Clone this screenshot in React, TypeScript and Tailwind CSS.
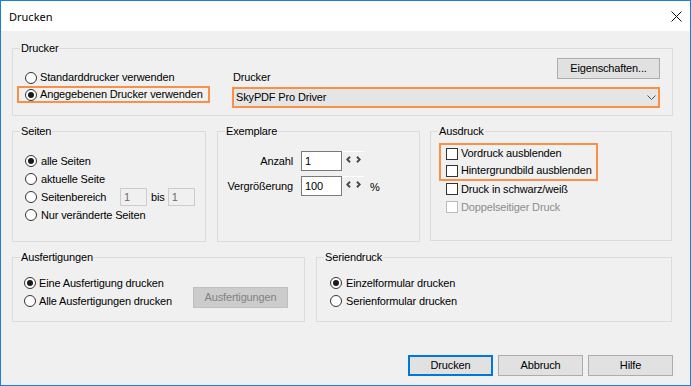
import type { ReactNode } from 'react'

function Radio({ checked = false }: { checked?: boolean }) {
  return (
    <span className="flex h-[12px] w-[12px] shrink-0 items-center justify-center rounded-full border border-[#333333] bg-white">
      {checked && <span className="h-[6px] w-[6px] rounded-full bg-[#1a1a1a]" />}
    </span>
  )
}

function Check({ disabled = false }: { disabled?: boolean }) {
  return (
    <span
      className={`h-[12px] w-[12px] shrink-0 border bg-white ${disabled ? 'border-[#bcbcbc]' : 'border-[#333333]'}`}
    />
  )
}

function Group({ title, className = '', children }: { title: string; className?: string; children?: ReactNode }) {
  return (
    <fieldset className={`min-w-0 border border-[#dcdcdc] ${className}`}>
      <legend className="ml-[7px] px-[1px] text-[11px] leading-[13px]">{title}</legend>
      {children}
    </fieldset>
  )
}

function Spinner() {
  return (
    <div className="flex h-[20px] w-[22px] items-start justify-center gap-[5px] border-t border-white pt-[4px]">
      <svg width="5" height="7" viewBox="0 0 5 7" fill="none" stroke="#4a4a4a" strokeWidth="2">
        <path d="M4 0.8 L1.3 3.5 L4 6.2" />
      </svg>
      <svg width="5" height="7" viewBox="0 0 5 7" fill="none" stroke="#4a4a4a" strokeWidth="2">
        <path d="M1 0.8 L3.7 3.5 L1 6.2" />
      </svg>
    </div>
  )
}

export default function App() {
  return (
    <div className="flex h-[386px] w-[691px] flex-col border border-[#1a7fd9] bg-[#f0f0f0] font-['Liberation_Sans',Arial,sans-serif] text-[11px] leading-[13px] tracking-[-0.15px] text-black">
      <div className="flex h-[30px] shrink-0 items-center justify-between bg-white pl-[8px] pr-[8px] tracking-normal">
        <span className="font-['Noto_Sans',sans-serif] text-[11px]">Drucken</span>
        <svg width="11" height="11" viewBox="0 0 11 11" fill="none" stroke="#111111" strokeWidth="1">
          <path d="M0.5 0.5 L10.5 10.5 M10.5 0.5 L0.5 10.5" />
        </svg>
      </div>

      <div className="flex flex-1 flex-col pl-[11px] pr-[17px]">
        {/* Drucker */}
        <Group title="Drucker" className="mt-[11px] h-[74px]">
          <div className="flex">
            <div className="flex w-[219px] flex-col pt-[14px]">
              <div className="flex h-[17px] items-center pl-[12px]">
                <Radio />
                <span className="ml-[3px]">Standarddrucker verwenden</span>
              </div>
              <div className="ml-[4px] flex h-[17px] w-[193px] items-center border-2 border-[#fa8f45] pl-[6px]">
                <Radio checked />
                <span className="ml-[3px]">Angegebenen Drucker verwenden</span>
              </div>
            </div>
            <div className="flex flex-1 flex-col pr-[12px]">
              <button
                type="button"
                className="mt-[3px] h-[21px] w-[103px] self-end border border-[#adadad] bg-[#e1e1e1]"
              >
                Eigenschaften...
              </button>
              <span className="-mt-[8px] pl-[1px]">Drucker</span>
              <div className="mt-[3px] flex h-[21px] items-center justify-between border-2 border-[#fa8f45] bg-[#e5e5e5] pl-[2px] pr-[2px]">
                <span>SkyPDF Pro Driver</span>
                <svg width="9" height="5" viewBox="0 0 9 5" fill="none" stroke="#555555" strokeWidth="1">
                  <path d="M0.5 0.5 L4.5 4.5 L8.5 0.5" />
                </svg>
              </div>
            </div>
          </div>
        </Group>

        {/* Seiten / Exemplare / Ausdruck */}
        <div className="mt-[9px] flex h-[117px] items-start">
          <Group title="Seiten" className="h-[117px] w-[194px]">
            <div className="flex flex-col pl-[12px] pt-[14px]">
              <div className="flex h-[18px] items-center">
                <Radio checked />
                <span className="ml-[4px]">alle Seiten</span>
              </div>
              <div className="flex h-[18px] items-center">
                <Radio />
                <span className="ml-[4px]">aktuelle Seite</span>
              </div>
              <div className="flex h-[18px] items-center">
                <Radio />
                <span className="ml-[4px] w-[79px]">Seitenbereich</span>
                <span className="flex h-[18px] w-[27px] items-center border border-[#cccccc] pl-[3px] text-[#6d6d6d]">
                  1
                </span>
                <span className="ml-[4px]">bis</span>
                <span className="ml-[3px] flex h-[18px] w-[27px] items-center border border-[#cccccc] pl-[3px] text-[#6d6d6d]">
                  1
                </span>
              </div>
              <div className="flex h-[18px] items-center">
                <Radio />
                <span className="ml-[4px]">Nur veränderte Seiten</span>
              </div>
            </div>
          </Group>

          <Group title="Exemplare" className="ml-[11px] h-[117px] w-[203px]">
            <div className="flex flex-col gap-[5px] pt-[13px]">
              <div className="flex h-[20px] items-center">
                <span className="w-[75px] text-right">Anzahl</span>
                <span className="ml-[8px] flex h-[20px] w-[41px] items-center border border-[#7a7a7a] bg-white pl-[3px]">
                  1
                </span>
                <Spinner />
              </div>
              <div className="flex h-[20px] items-center">
                <span className="w-[75px] text-right">Vergrößerung</span>
                <span className="ml-[8px] flex h-[20px] w-[41px] items-center border border-[#7a7a7a] bg-white pl-[3px]">
                  100
                </span>
                <Spinner />
                <span className="ml-[6px] mt-[3px]">%</span>
              </div>
            </div>
          </Group>

          <Group title="Ausdruck" className="ml-[10px] h-[116px] w-[242px]">
            <div className="flex flex-col pt-[5px]">
              <div className="ml-[8px] flex w-[159px] flex-col border-2 border-[#fa8f45] pl-[5px]">
                <div className="flex h-[17px] items-center">
                  <Check />
                  <span className="ml-[3px]">Vordruck ausblenden</span>
                </div>
                <div className="flex h-[17px] items-center">
                  <Check />
                  <span className="ml-[3px]">Hintergrundbild ausblenden</span>
                </div>
              </div>
              <div className="-mt-[1px] flex flex-col pl-[15px]">
                <div className="flex h-[18px] items-center">
                  <Check />
                  <span className="ml-[3px]">Druck in schwarz/weiß</span>
                </div>
                <div className="flex h-[18px] items-center">
                  <Check disabled />
                  <span className="ml-[3px] text-[#8d8d8d]">Doppelseitiger Druck</span>
                </div>
              </div>
            </div>
          </Group>
        </div>

        {/* Ausfertigungen / Seriendruck */}
        <div className="mt-[9px] flex h-[71px]">
          <Group title="Ausfertigungen" className="h-[71px] w-[293px]">
            <div className="flex items-end pt-[10px]">
              <div className="flex flex-col pl-[11px]">
                <div className="flex h-[18px] items-center">
                  <Radio checked />
                  <span className="ml-[3px]">Eine Ausfertigung drucken</span>
                </div>
                <div className="flex h-[18px] items-center">
                  <Radio />
                  <span className="ml-[3px]">Alle Ausfertigungen drucken</span>
                </div>
              </div>
              <button
                type="button"
                className="mb-[2px] ml-auto mr-[16px] h-[21px] w-[95px] border border-[#bfbfbf] bg-[#cccccc] text-[#838383]"
              >
                Ausfertigungen
              </button>
            </div>
          </Group>

          <Group title="Seriendruck" className="ml-[11px] h-[71px] w-[356px]">
            <div className="flex flex-col pl-[13px] pt-[10px]">
              <div className="flex h-[18px] items-center">
                <Radio checked />
                <span className="ml-[4px]">Einzelformular drucken</span>
              </div>
              <div className="flex h-[18px] items-center">
                <Radio />
                <span className="ml-[4px]">Serienformular drucken</span>
              </div>
            </div>
          </Group>
        </div>

        {/* Buttons */}
        <div className="mt-[33px] flex justify-end gap-[5px]">
          <button type="button" className="h-[21px] w-[85px] border-2 border-[#0078d7] bg-[#e1e1e1]">
            Drucken
          </button>
          <button type="button" className="h-[21px] w-[85px] border border-[#adadad] bg-[#e1e1e1]">
            Abbruch
          </button>
          <button type="button" className="h-[21px] w-[85px] border border-[#adadad] bg-[#e1e1e1]">
            Hilfe
          </button>
        </div>
      </div>
    </div>
  )
}
